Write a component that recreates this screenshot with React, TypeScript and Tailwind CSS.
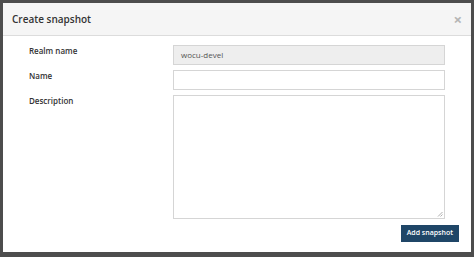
import React from "react";

export default function App() {
  return (
    <div
      className="w-[474px] h-[257px] bg-[#4d4d4d] pt-[3px] pl-[3px] pr-[3px] pb-[5px] overflow-hidden"
      style={{ fontFamily: '"Open Sans", "Liberation Sans", sans-serif' }}
    >
      <div className="w-[468px] h-[249px] bg-white flex flex-col">
        <div className="h-[33px] bg-[#f5f5f5] border-b border-[#dcdcdc] flex items-center justify-between pl-[9px] pr-[9px]">
          <span className="text-[10px] font-semibold text-[#333]">Create snapshot</span>
          <span className="text-[15px] leading-none font-bold text-[#b5b5b5]">×</span>
        </div>
        <div className="flex flex-col pt-[9px] pl-[26px] pr-[26px] gap-[5px]">
          <div className="flex items-start">
            <label className="w-[144px] text-[8px] font-semibold text-[#333] pt-[0px]">Realm name</label>
            <div className="w-[272px] h-[20px] bg-[#eeeeee] border border-[#d5d5d5] flex items-center px-[7px] text-[8px] text-[#555]">
              wocu-devel
            </div>
          </div>
          <div className="flex items-start">
            <label className="w-[144px] text-[8px] font-semibold text-[#333] pt-[0px]">Name</label>
            <div className="w-[272px] h-[20px] bg-white border border-[#d5d5d5]" />
          </div>
          <div className="flex items-start">
            <label className="w-[144px] text-[8px] font-semibold text-[#333] pt-[0px]">Description</label>
            <div className="relative w-[272px] h-[124px] bg-white border border-[#d5d5d5]">
              <svg className="absolute right-[1px] bottom-[1px]" width="6" height="6" viewBox="0 0 6 6">
                <path d="M5.5 1 L1 5.5 M5.5 3.5 L3.5 5.5" stroke="#999" strokeWidth="0.8" />
              </svg>
            </div>
          </div>
        </div>
        <div className="flex justify-end pr-[12px] mt-[6px]">
          <button className="h-[17px] px-[6px] bg-[#1f4667] text-white text-[7px] font-semibold flex items-center">
            Add snapshot
          </button>
        </div>
      </div>
    </div>
  );
}
